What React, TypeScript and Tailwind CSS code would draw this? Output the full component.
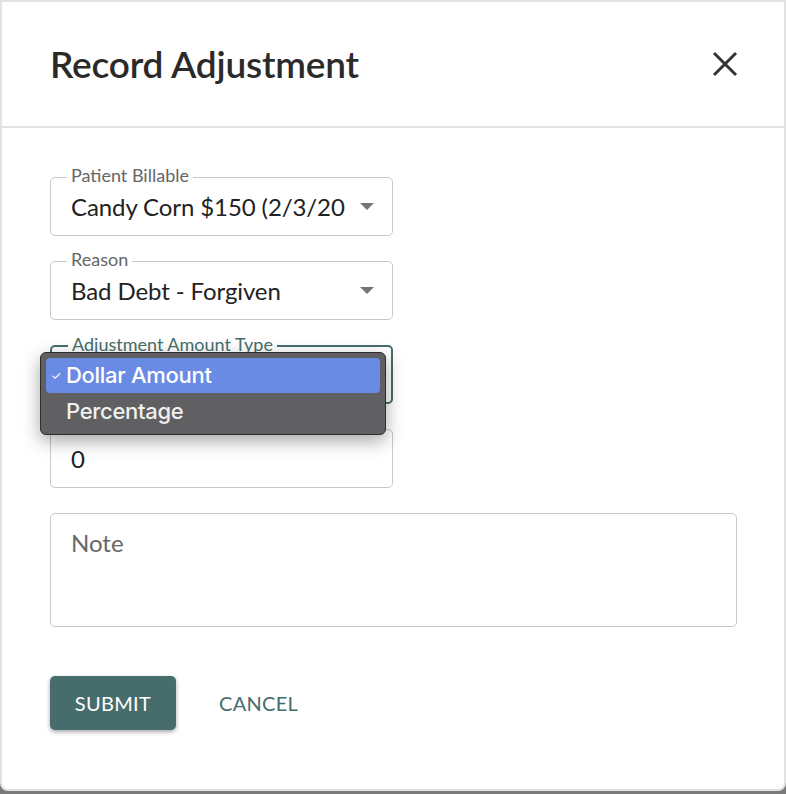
import React from "react";

const font = { fontFamily: "Lato, 'Open Sans', sans-serif" };

const Arrow: React.FC = () => (
  <svg className="w-[14px] h-[7px]" viewBox="0 0 14 7">
    <path d="M0 0h14L7 7z" fill="#757575" />
  </svg>
);

const Field: React.FC<{
  label?: string;
  value?: string;
  select?: boolean;
  focused?: boolean;
  placeholder?: string;
  className?: string;
}> = ({ label, value, select, focused, placeholder, className }) => (
  <div
    className={
      "relative rounded-[5px] flex items-center px-[20px] " +
      (focused ? "border-2 border-[#456e6b] " : "border border-[#c8c8c8] ") +
      (className || "h-[59px] w-[343px]")
    }
  >
    {label && (
      <span
        className={
          "absolute top-[-14px] left-[16px] bg-white px-[4px] text-[18px] leading-[22px] " +
          (focused ? "text-[#456e6b]" : "text-[#666]")
        }
      >
        {label}
      </span>
    )}
    {value !== undefined && (
      <span className="flex-1 text-[24px] text-[#222] whitespace-nowrap overflow-hidden tracking-[-0.1px]">
        {value}
      </span>
    )}
    {placeholder && (
      <span className="self-start mt-[11px] text-[24px] text-[#666]">{placeholder}</span>
    )}
    {select && (
      <span className="ml-[10px] mr-[-2px]">
        <Arrow />
      </span>
    )}
  </div>
);

export default function App() {
  return (
    <div className="w-[786px] h-[794px] bg-[#7a7a7a]" style={font}>
      <div className="w-[786px] h-[791px] bg-white border-2 border-[#e2e2e2] rounded-b-[8px] flex flex-col">
        <div className="h-[126px] border-b-2 border-[#e2e2e2] flex items-center justify-between pl-[48px] pr-[46px]">
          <h1 className="text-[37px] font-semibold text-[#2a2a2a] tracking-[-0.2px]">
            Record Adjustment
          </h1>
          <svg className="w-[26px] h-[26px]" viewBox="0 0 26 26">
            <path d="M2 2L24 24M24 2L2 24" stroke="#333" strokeWidth="3" />
          </svg>
        </div>
        <div className="relative pl-[48px] pr-[47px] pt-[49px] flex flex-col gap-[25px]">
          <Field label="Patient Billable" value="Candy Corn $150 (2/3/20" select />
          <Field label="Reason" value="Bad Debt - Forgiven" select />
          <Field label="Adjustment Amount Type" focused />
          <Field value="0" />
          <Field placeholder="Note" className="h-[114px] w-full" />
          <div className="flex items-center gap-[43px] mt-[24px]">
            <button className="w-[126px] h-[54px] rounded-[5px] bg-[#476c6c] text-white text-[20px] tracking-[0.3px] shadow-[0_2px_4px_rgba(0,0,0,0.35)]">
              SUBMIT
            </button>
            <span className="text-[20px] text-[#476c6c] tracking-[0.3px]">CANCEL</span>
          </div>

          <div
            className="absolute left-[38px] top-[224px] w-[346px] h-[83px] rounded-[6px] bg-[#606062] border border-[#2e2e2e] shadow-[0_6px_18px_rgba(0,0,0,0.35)] p-[5px] flex flex-col"
            style={{ fontFamily: "Inter, 'Liberation Sans', sans-serif" }}
          >
            <div className="h-[35px] rounded-[4px] bg-[#6a8be4] flex items-center text-white">
              <span className="w-[20px] text-center text-[12px]">✓</span>
              <span className="text-[22px] font-medium tracking-[-0.3px]">Dollar Amount</span>
            </div>
            <div className="h-[36px] flex items-center text-[#f0f0f0]">
              <span className="w-[20px]" />
              <span className="text-[22px] font-medium tracking-[-0.3px]">Percentage</span>
            </div>
          </div>
        </div>
      </div>
    </div>
  );
}
